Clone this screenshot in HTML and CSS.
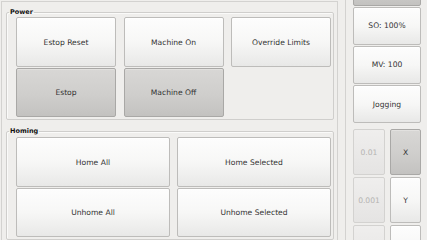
FILE: index.html
```html
<!DOCTYPE html>
<html>
<head>
<meta charset="utf-8">
<link rel="stylesheet" href="styles.css">
</head>
<body>
<div class="main">
  <div class="left">
    <fieldset class="group power">
      <legend>Power</legend>
      <div class="grid3">
        <button class="btn">Estop Reset</button>
        <button class="btn">Machine On</button>
        <button class="btn">Override Limits</button>
        <button class="btn on">Estop</button>
        <button class="btn on">Machine Off</button>
      </div>
    </fieldset>
    <fieldset class="group homing">
      <legend>Homing</legend>
      <div class="grid2">
        <button class="btn">Home All</button>
        <button class="btn">Home Selected</button>
        <button class="btn">Unhome All</button>
        <button class="btn">Unhome Selected</button>
      </div>
    </fieldset>
  </div>
  <div class="right">
    <div class="col">
      <button class="btn rbtn on"></button>
      <button class="btn rbtn">SO: 100%</button>
      <button class="btn rbtn">MV: 100</button>
      <button class="btn rbtn">Jogging</button>
      <div class="jog">
        <button class="btn dis">0.01</button>
        <button class="btn on">X</button>
        <button class="btn dis">0.001</button>
        <button class="btn">Y</button>
        <button class="btn dis"></button>
        <button class="btn"></button>
      </div>
    </div>
  </div>
</div>
</body>
</html>
```
FILE: styles.css
```css
html, body {
  margin: 0;
  padding: 0;
}
body {
  width: 427px;
  height: 240px;
  overflow: hidden;
  background: #efeeec;
  font-family: "DejaVu Sans", sans-serif;
  color: #333;
}
.main {
  display: flex;
  height: 240px;
  gap: 7px;
  overflow: hidden;
}
.left {
  margin-left: 1px;
  margin-top: 1px;
  width: 328px;
  height: 260px;
  border: 1px solid #d3d2d0;
  padding: 6px 3px 0 4px;
  display: flex;
  flex-direction: column;
  gap: 7px;
  flex: none;
}
.group {
  margin: 0;
  border: 1px solid #cfcecc;
  border-radius: 2px;
  padding: 1px 2px 2px 9px;
  min-width: 0;
  box-shadow: inset 1px 1px 0 #fafaf9;
}
.group legend {
  font-weight: bold;
  font-size: 6.5px;
  line-height: 8px;
  padding: 0 1px 0 1px;
  margin-left: -7px;
  color: #111;
}
.homing {
  padding-top: 2px;
}
.grid3 {
  display: grid;
  grid-template-columns: 1fr 1fr 1fr;
  grid-template-rows: 50px 49px;
  column-gap: 7.5px;
  row-gap: 1px;
}
.grid2 {
  display: grid;
  grid-template-columns: 1fr 1fr;
  grid-template-rows: 50px 49px;
  column-gap: 7px;
  row-gap: 1px;
}
.btn {
  font-family: "DejaVu Sans", sans-serif;
  font-size: 7.6px;
  color: #333;
  border: 1px solid #bdbcba;
  border-radius: 2px;
  background: linear-gradient(#fdfdfd 0%, #f7f7f6 50%, #e8e8e7 100%);
  padding: 0;
  margin: 0;
  box-shadow: inset 0 1px 0 #ffffff;
}
.btn.on {
  background: linear-gradient(#d8d7d5 0%, #cfcecc 55%, #c3c2c0 100%);
  border-color: #a9a8a6;
  box-shadow: inset 0 1px 0 #e2e1df;
}
.btn.dis {
  background: linear-gradient(#efeeed, #e5e4e3);
  border-color: #d3d2d0;
  color: #b5b4b2;
  box-shadow: none;
}
.right {
  border-left: 1px solid #d3d2d0;
  padding-left: 7px;
  flex: none;
  width: 74px;
}
.col {
  display: flex;
  flex-direction: column;
  width: 68px;
  margin-top: -32px;
  gap: 1.6px;
}
.rbtn {
  height: 37.5px;
}
.jog {
  margin-top: 5px;
  display: grid;
  grid-template-columns: 32px 31px;
  grid-template-rows: 46px 46px 46px;
  column-gap: 5px;
  row-gap: 2px;
}
```
